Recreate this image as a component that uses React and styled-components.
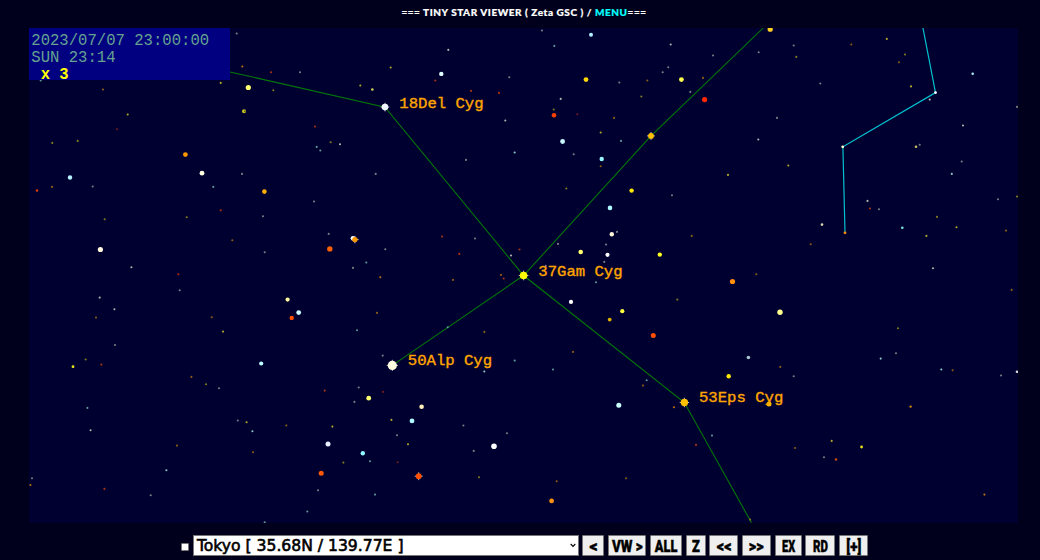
import { useState } from 'react';
import styled, { createGlobalStyle } from 'styled-components';

const GlobalStyle = createGlobalStyle`
  * {
    box-sizing: border-box;
  }
  body {
    margin: 0;
    background: #00001c;
    overflow: hidden;
  }
`;

const Page = styled.div`
  display: flex;
  flex-direction: column;
  width: 1040px;
  height: 560px;
`;

const Title = styled.h1`
  display: flex;
  align-items: center;
  justify-content: center;
  height: 28px;
  margin: 0;
  padding: 0 0 4px 8px;
  color: #fff;
  font: 900 10px 'Comic Sans MS', Lato, sans-serif;
  letter-spacing: 0.55px;
  -webkit-text-stroke: 0.2px;
  white-space: pre;
`;

const MenuLink = styled.a`
  color: #00ffff;
  text-decoration: none;
`;

const Sky = styled.main`
  display: grid;
  width: 989px;
  height: 494.5px;
  margin-left: 29.3px;
  background: #000030;
`;

const Chart = styled.svg`
  grid-area: 1 / 1;
  width: 989px;
  height: 494.5px;
`;

const Label = styled.text`
  fill: #ffa500;
  font: 14.2px 'Liberation Mono', monospace;
  stroke: #ffa500;
  stroke-width: 0.35px;
`;

const Clock = styled.div`
  grid-area: 1 / 1;
  z-index: 1;
  width: 201px;
  height: 52px;
  padding: 5px 0 0 2px;
  background: #000080;
  color: #66a38f;
  font: 15.6px/17px 'Liberation Mono', monospace;
  white-space: pre;
`;

const Zoom = styled.div`
  color: #ffff00;
  font-weight: bold;
`;

const Toolbar = styled.footer`
  display: flex;
  align-items: center;
  gap: 3.6px;
  height: 37.5px;
  padding: 9px 0 0 181.3px;
`;

const Check = styled.input`
  appearance: none;
  width: 8px;
  height: 8px;
  margin: 3px 0 0;
  border: 1px solid #777;
  border-radius: 1px;
  background: #fff;
`;

const Place = styled.button`
  display: flex;
  align-items: center;
  justify-content: space-between;
  width: 386px;
  height: 21px;
  padding: 0 2px 0 3px;
  border: 1px solid #777;
  background: #fff;
  color: #000;
  font: 15.6px 'DejaVu Sans', sans-serif;
  -webkit-text-stroke: 0.6px;
  white-space: pre;
`;

const Key = styled.button`
  display: flex;
  align-items: center;
  justify-content: center;
  flex: none;
  width: ${props => props.$width}px;
  height: 21px;
  padding: 1px 0 0;
  border: 1px solid #777;
  border-radius: 1px;
  background: #efefef;
  color: #000;
  font: 900 16px Roboto, sans-serif;
  -webkit-text-stroke: 0.4px;
  white-space: pre;
`;

const Caption = styled.span`
  transform: scaleX(${props => props.$squeeze});
`;

// faint stars, grouped by tone: x, y pairs
const faint = {
  '#7c7c84': [
    [236.7, 33.3], [92.7, 186.3], [242, 173.7], [300, 72], [509.3, 77], [466, 159.7], [375.7, 173.7],
    [314, 201.3], [263, 216], [328.7, 233.7], [385.3, 249], [264.7, 252], [353, 267.7], [475, 238.3],
    [542, 30.3], [713, 55.3], [758.7, 52], [668.3, 67], [662.7, 72], [619.3, 82.3], [690.3, 91.7],
    [777, 117.7], [573.7, 154], [672, 195], [617, 231.7], [606, 244.3], [558, 243.7], [604.3, 261.7],
    [545.7, 265.7], [793.7, 45.3], [820.3, 83.3], [1017, 106.7], [919.7, 144.6], [961.7, 161.3],
    [998, 199], [879, 209], [179.7, 290], [115, 344.8], [219, 388], [237.8, 420.3], [150.7, 495],
    [382.7, 355.4], [358.7, 387.3], [354.4, 401.7], [397, 435], [463.4, 425.3], [507, 433],
    [473.7, 450.7], [318, 490], [896, 353], [1001, 375.3], [793.7, 376], [824, 457], [32, 478],
  ],
  '#b4b4b4': [
    [131.4, 267], [448.3, 49.7], [505.3, 120.3], [340, 144], [511, 255.3], [670.7, 44.3],
    [560.7, 98.7], [758.3, 139.3], [929.7, 99.4], [963, 125.3], [867.5, 200.7], [933, 268],
    [99.7, 297.4], [114.4, 309], [90.6, 430],
  ],
  '#5d9697': [
    [40.7, 80.3], [213.3, 186.7], [316.7, 146.7], [320.3, 150.3], [366.3, 262.3], [554.3, 45.7],
    [621, 140.7], [87.4, 407.7], [357, 330], [447.7, 327], [514.7, 360.4], [370, 461],
    [375, 494.4], [307.3, 511.3], [264.7, 522], [596, 282], [553, 369.3], [646.7, 380], [712, 435.4],
  ],
  '#8fc8c8': [
    [514.7, 152.3], [252.4, 431], [166.4, 470], [484.3, 371.3], [880.7, 358.4], [941.3, 369.3], [951.8, 173.7],
  ],
  '#827b20': [
    [52.3, 142.7], [77.7, 140.7], [104.7, 219], [186.7, 217], [273.3, 90], [330.7, 142], [641.3, 96.3],
    [553.7, 109.3], [566.3, 188.3], [905, 54.3], [796.3, 56.7], [937, 216.7], [1017, 196.3],
    [343.4, 462.4], [479, 477], [677.3, 299.4], [898, 328], [206, 384], [85.7, 359.3], [750, 519.4],
  ],
  '#b3a52a': [
    [220.7, 82.7], [127.7, 114.3], [390.7, 67.3], [360.3, 85.3], [600.7, 132.3], [728, 174.7],
    [788.3, 165.3], [886.8, 38.7], [911, 86.2], [956.5, 227], [926.4, 235.7], [223, 331.4],
    [246.6, 422], [332.4, 426.4], [391.4, 419.7], [408, 444], [831.7, 440.7],
  ],
  '#8d5c16': [
    [103, 89.3], [52, 186.7], [232.3, 240], [453, 279.7], [501, 274.7], [703, 77.7], [647.3, 80.3],
    [614, 117.7], [600.7, 166], [691.7, 235.7], [756.3, 274], [851.3, 44.3], [899, 62], [810.7, 244],
    [96, 317.3], [211.7, 317], [191.4, 376.7], [177, 445.4], [253, 452], [377, 312.7], [484.4, 331.7],
    [286.3, 425.3], [573, 351.7], [643, 385.4], [626, 478], [556.7, 481], [1011.6, 289.7],
    [952.6, 370], [780.3, 366.7], [795, 447.8], [1006, 230.4],
  ],
  '#c07010': [
    [242.3, 66.3], [380.3, 277], [30.4, 484.8], [674, 407], [984.4, 494.4],
  ],
  '#a93414': [
    [220.7, 210], [178.3, 274], [271, 72], [435.3, 80.3], [471, 90.7], [499, 92.7], [315, 126.3],
    [442, 236.3], [459.3, 253.7], [503.7, 278.3], [519.5, 249.3], [870, 208.3], [101.4, 364.4],
    [104.4, 488.7], [324.7, 390.4], [696, 444.7],
  ],
  '#701c20': [[117, 129], [577.3, 114], [383, 391.7], [397.7, 462]],
};

// x, y, radius, colour
const stars = [
  [248.3, 87.3, 2.6, '#ffff70'], [244, 111, 2, '#c8c820'], [185.4, 154.4, 2.4, '#ff9800'],
  [202, 173, 2.4, '#fffde0'], [70, 177.3, 2.2, '#b8f4ff'], [37, 190.3, 1.2, '#e04010'],
  [100.4, 249.3, 2.6, '#fff8dc'], [441.3, 73.7, 2.2, '#e0ffff'], [372.3, 89.3, 1.3, '#d0d058'],
  [264.4, 191.4, 2.3, '#ffb000'], [353, 238.1, 2.4, '#ffffff'], [329.8, 248.7, 2.7, '#ff6000'],
  [591, 34.6, 2, '#b0f0ff'], [770.2, 29, 2.6, '#ffd020'], [681.4, 79.4, 2.4, '#ffff50'],
  [586, 79.4, 2.4, '#ffd800'], [704.6, 99.4, 2.6, '#ff2800'], [554, 115, 2.3, '#ff4000'],
  [562.6, 141.3, 2.4, '#c8f8ff'], [601.7, 158.8, 2.2, '#98f8ff'], [631.6, 190.4, 2.2, '#ffe800'],
  [610, 207.7, 2.3, '#b0f8ff'], [611.8, 234, 2.2, '#fff8d8'], [580.7, 251.8, 2.3, '#ffff70'],
  [607.5, 254.6, 2.1, '#ffffff'], [659.8, 254.4, 2.2, '#ffff20'], [972.7, 73.5, 1.3, '#a8e8f0'],
  [935.5, 92.4, 1.4, '#ffffff'], [842.7, 146.6, 1.4, '#ffffd0'], [916, 146.5, 1.3, '#c8c060'],
  [822, 224.4, 1.3, '#ddd8b0'], [902.3, 227.6, 1.3, '#80e0e0'], [845, 232.6, 1.4, '#ff8800'],
  [73, 366.5, 1.4, '#e8e820'], [287.6, 299.4, 2.1, '#fff8a0'], [298.7, 312.4, 2.4, '#c8f8ff'],
  [291.7, 317.7, 2.2, '#ff5000'], [261.2, 363.3, 2.1, '#c0ffff'], [368.7, 398, 2.4, '#ffff70'],
  [421.6, 406.6, 2.3, '#fff0b8'], [412, 420.7, 2.4, '#b0f8ff'], [328, 443.7, 2.5, '#e8f0ff'],
  [362.8, 453, 2.2, '#90f8ff'], [494, 446, 2.8, '#ffffff'], [321.2, 473, 2.5, '#ff5800'],
  [732.5, 281.3, 2.6, '#ff9010'], [571, 301.7, 2.1, '#ffffff'], [622.3, 311, 2.1, '#ffff40'],
  [609.7, 319.4, 1.9, '#e0b000'], [653.3, 335.3, 2.5, '#ff5000'], [748.4, 357.3, 1.8, '#a8c4cc'],
  [728.7, 376, 2.2, '#ffe800'], [618.8, 405, 2.5, '#c8ffff'], [769, 403.8, 2.5, '#ffb800'],
  [551.6, 500.7, 2.4, '#ff9010'], [780, 312, 2.7, '#ffff90'], [1017, 371.6, 1.3, '#dddddd'],
  [910.6, 406.4, 1.2, '#d08010'], [861.6, 446.8, 1.4, '#e8e010'], [836, 459.3, 1.2, '#d05010'],
];

const brightStars = [
  [385, 106.9, 3.3, '#f0f8ff'],
  [354.9, 239.4, 2.7, '#ff9800'],
  [651, 135.7, 2.9, '#ffc000'],
  [523.6, 275.3, 3.8, '#ffff00'],
  [392.3, 365.2, 4.6, '#fffde0'],
  [684.4, 402.3, 3.7, '#ffc000'],
  [418.7, 476, 2.9, '#ff5000'],
];

const labels = [
  [399.3, 107.3, '18Del Cyg'],
  [538.3, 275.8, '37Gam Cyg'],
  [407.8, 365.2, '50Alp Cyg'],
  [699, 402.2, '53Eps Cyg'],
];

const keys = [
  ['<', 22, 1],
  ['VW >', 38.4, 0.84],
  ['ALL', 32, 0.8],
  ['Z', 20, 0.8],
  ['<<', 29, 0.9],
  ['>>', 29.6, 0.9],
  ['EX', 26.6, 0.68],
  ['RD', 30, 0.72],
  ['[+]', 29.4, 0.85],
];

const StarChart = () => (
  <Chart viewBox="29 27.8 989 494.5">
    <g fill="none" stroke="#007a08" strokeWidth="1.05">
      <path d="M230 71.7L385 107L523.6 275.3L684.4 402.3L751.5 522.5" />
      <path d="M392.3 365.2L523.6 275.3L651 135.7L763.5 27.5" />
    </g>
    <path d="M922.8 27L935.5 92.4L842.9 146.6L845 232.6" fill="none" stroke="#00c0d0" strokeWidth="1.2" />
    {Object.entries(faint).map(([color, points]) => (
      <g key={color} fill={color}>
        {points.map(([x, y]) => <circle key={`${x}-${y}`} cx={x} cy={y} r="1.05" />)}
      </g>
    ))}
    {stars.map(([x, y, r, color]) => <circle key={`${x}-${y}`} cx={x} cy={y} r={r} fill={color} />)}
    <circle cx="244.8" cy="111.2" r="0.8" fill="#555020" />
    {brightStars.map(([x, y, r, color]) => (
      <g key={color + x}>
        <path
          d={`M${x - r - 1} ${y}H${x + r + 1}M${x} ${y - r - 1}V${y + r + 1}`}
          stroke="#d8d8d8"
          strokeWidth="0.9"
        />
        <circle cx={x} cy={y} r={r} fill={color} />
      </g>
    ))}
    {labels.map(([x, y, name]) => (
      <Label key={name} transform={`translate(${x} ${y}) scale(1.1 1)`}>{name}</Label>
    ))}
  </Chart>
);

const App = () => {
  const [checked, setChecked] = useState(false);

  return (
    <Page>
      <GlobalStyle />
      <Title>
        {'=== TINY STAR VIEWER ( Zeta GSC ) / '}
        <MenuLink href="#menu">MENU</MenuLink>
        ===
      </Title>
      <Sky>
        <StarChart />
        <Clock>
          <div>2023/07/07 23:00:00</div>
          <div>SUN 23:14</div>
          <Zoom>{' x 3'}</Zoom>
        </Clock>
      </Sky>
      <Toolbar>
        <Check type="checkbox" checked={checked} onChange={() => setChecked(!checked)} />
        <Place>
          Tokyo [ 35.68N / 139.77E ]
          <svg width="6" height="5" viewBox="0 0 6 5">
            <path d="M0.7 1L3 3.4L5.3 1" fill="none" stroke="#000" strokeWidth="1.1" />
          </svg>
        </Place>
        {keys.map(([text, width, squeeze]) => (
          <Key key={text} $width={width}>
            <Caption $squeeze={squeeze}>{text}</Caption>
          </Key>
        ))}
      </Toolbar>
    </Page>
  );
};

export default App;
